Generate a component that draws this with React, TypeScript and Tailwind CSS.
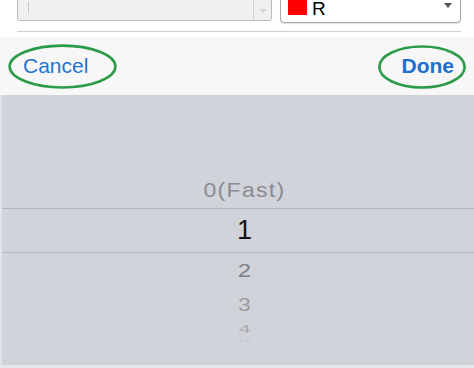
import React from 'react';

const font = { fontFamily: '"Liberation Sans", Arial, sans-serif' };

function Ellipse({ className }: { className: string }) {
  return (
    <svg className={className} viewBox="0 0 100 40" preserveAspectRatio="none">
      <ellipse cx="50" cy="20" rx="48.5" ry="18.6" fill="none" stroke="#2c9b47" strokeWidth="2.6" vectorEffect="non-scaling-stroke" />
    </svg>
  );
}

export default function App() {
  return (
    <div className="w-[474px] h-[368px] overflow-hidden bg-white" style={font}>
      {/* form fields, cut off at the top */}
      <div className="h-[37px] bg-white overflow-hidden">
        <div className="flex items-start ml-[17px] -mt-[10px]">
          <div className="w-[255px] h-[31px] flex rounded-[3px] border border-[#b9b9b9] bg-[#f0f0f0]">
            <div className="flex-1 pl-[10px] pt-[11px]">
              <div className="w-px h-[11px] bg-[#c4c4c4]" />
            </div>
            <div className="w-[18px] border-l border-[#cfcfcf] flex items-end justify-center pb-[7px]">
              <div className="w-0 h-0 border-l-[4px] border-r-[4px] border-t-[4px] border-l-transparent border-r-transparent border-t-[#d6d6d6]" />
            </div>
          </div>
          <div className="ml-[8px] w-[181px] h-[33px] rounded-[4px] border border-[#a8a8a8] bg-white shadow-[0_1px_1px_rgba(0,0,0,0.12)] flex items-end pb-[7px] pl-[7px] pr-[8px]">
            <div className="w-[19px] h-[19px] bg-[#ff0000]" />
            <span className="ml-[5px] text-[19px] leading-[13px] text-black">R</span>
            <div className="flex-1" />
            <div className="mb-[7px] w-0 h-0 border-l-[4.5px] border-r-[4.5px] border-t-[5px] border-l-transparent border-r-transparent border-t-[#555]" />
          </div>
        </div>
        <div className="ml-[17px] w-[444px] mt-[8px] h-px bg-[#cdd0d3]" />
      </div>

      {/* toolbar */}
      <div className="relative h-[58px] bg-[#f7f7f7] flex items-center justify-between pl-[23px] pr-[20px]">
        <span className="text-[21px] text-[#1f74d0]">Cancel</span>
        <span className="text-[21px] font-bold text-[#1c6fcf]">Done</span>
        <Ellipse className="absolute left-[8px] top-[7px] w-[109px] h-[45px]" />
        <Ellipse className="absolute left-[378px] top-[8px] w-[88px] h-[44px]" />
      </div>

      {/* picker wheel */}
      <div className="h-[270px] bg-[#d1d3db] border-l-2 border-[#e2e3e9] flex flex-col">
        <div className="h-[77px]" />
        <div className="h-[36px] flex items-center justify-center pl-[13px]">
          <span className="text-[23px] tracking-[1.3px] text-[#8b8b91] scale-y-[0.9]">0(Fast)</span>
        </div>
        <div className="h-[45px] border-y border-[#b4b5bc] flex items-center justify-center pl-[13px]">
          <span className="text-[27px] text-[#141414]">1</span>
        </div>
        <div className="h-[36px] flex items-center justify-center pl-[13px]">
          <span className="text-[24px] text-[#7e7e84] scale-y-[0.75]">2</span>
        </div>
        <div className="h-[32px] flex items-center justify-center pl-[13px]">
          <span className="text-[23px] text-[#9a9aa0] scale-y-[0.8]">3</span>
        </div>
        <div className="h-[16px] flex items-center justify-center pl-[13px]">
          <span className="text-[22px] leading-none text-[#acacb2] scale-y-[0.5]">4</span>
        </div>
        <div className="h-[8px] flex items-center justify-center overflow-hidden pl-[13px]">
          <span className="text-[22px] leading-none text-[#c0c0c6] scale-y-[0.15]">5</span>
        </div>
      </div>
      <div className="h-[3px] bg-[#e6e7ec]" />
    </div>
  );
}
